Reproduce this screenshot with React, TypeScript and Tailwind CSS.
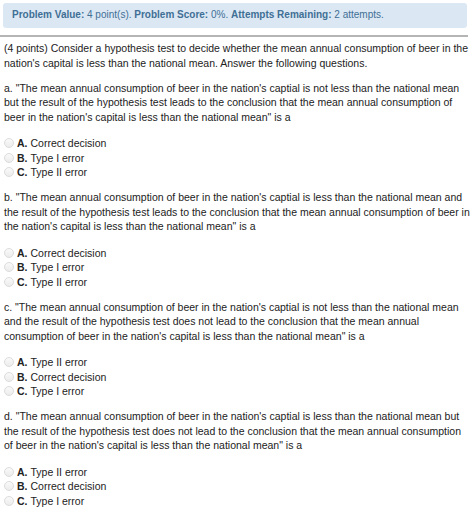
import React from "react";

const Radio = () => (
  <span className="inline-block w-[10px] h-[10px] rounded-full border border-[#dcdcdc] bg-gradient-to-b from-[#fafafa] to-[#ececec] mr-[2px]" />
);

const Option = ({ letter, text }: { letter: string; text: string }) => (
  <div className="flex items-center h-[14.5px] pl-[4px]">
    <Radio />
    <span className="font-bold ml-[1px]">{letter}.</span>
    <span className="ml-[3px]">{text}</span>
  </div>
);

const Question = ({ text, options }: { text: string; options: [string, string][] }) => (
  <div className="mt-[10.5px]">
    <p className="pl-[4px] pr-[4px]">{text}</p>
    <div className="mt-[12px]">
      {options.map(([l, t]) => (
        <Option key={l} letter={l} text={t} />
      ))}
    </div>
  </div>
);

export default function App() {
  return (
    <div
      className="w-[474px] h-[520px] bg-white text-[#222] text-[10.5px] leading-[14.5px] overflow-hidden"
      style={{ fontFamily: '"Liberation Sans", Arial, Helvetica, sans-serif' }}
    >
      <div className="pt-[3px] pl-[3px] pr-[7px]">
        <div className="bg-[#dbe8f4] rounded-[3px] h-[25px] flex items-center px-[9px] text-[10px] text-[#3f6f95]">
          <span>
            <b>Problem Value:</b> 4 point(s). <b>Problem Score:</b> 0%. <b>Attempts Remaining:</b> 2 attempts.
          </span>
        </div>
      </div>
      <div className="mt-[7px] mr-[6px] h-[2px] bg-[#b5b5b5]" />
      <div className="pt-[4px]">
        <p className="pl-[4px] pr-[4px]">
          (4 points) Consider a hypothesis test to decide whether the mean annual consumption of beer in the nation's capital is less than the national mean. Answer the following questions.
        </p>
        <Question
          text={'a. "The mean annual consumption of beer in the nation\'s captial is not less than the national mean but the result of the hypothesis test leads to the conclusion that the mean annual consumption of beer in the nation\'s capital is less than the national mean" is a'}
          options={[["A", "Correct decision"], ["B", "Type I error"], ["C", "Type II error"]]}
        />
        <Question
          text={'b. "The mean annual consumption of beer in the nation\'s captial is less than the national mean and the result of the hypothesis test leads to the conclusion that the mean annual consumption of beer in the nation\'s capital is less than the national mean" is a'}
          options={[["A", "Correct decision"], ["B", "Type I error"], ["C", "Type II error"]]}
        />
        <Question
          text={'c. "The mean annual consumption of beer in the nation\'s captial is not less than the national mean and the result of the hypothesis test does not lead to the conclusion that the mean annual consumption of beer in the nation\'s capital is less than the national mean" is a'}
          options={[["A", "Type II error"], ["B", "Correct decision"], ["C", "Type I error"]]}
        />
        <Question
          text={'d. "The mean annual consumption of beer in the nation\'s captial is less than the national mean but the result of the hypothesis test does not lead to the conclusion that the mean annual consumption of beer in the nation\'s capital is less than the national mean" is a'}
          options={[["A", "Type II error"], ["B", "Correct decision"], ["C", "Type I error"]]}
        />
      </div>
    </div>
  );
}
